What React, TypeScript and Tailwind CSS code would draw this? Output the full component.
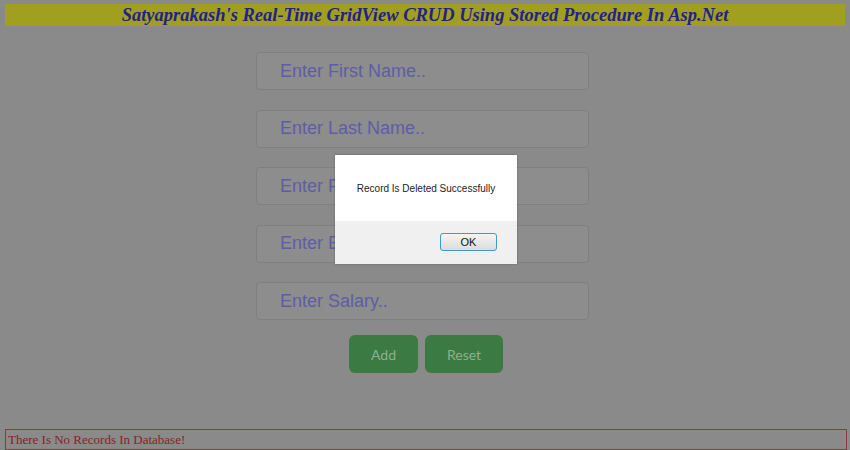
const fields = [
  "Enter First Name..",
  "Enter Last Name..",
  "Enter Phone Number..",
  "Enter Email..",
  "Enter Salary..",
];

export default function App() {
  return (
    <div className="relative w-[850px] h-[450px] overflow-hidden bg-[#8a8a8a] font-['Liberation_Sans',Arial,sans-serif]">
      {/* Title bar */}
      <div className="pt-[4px] px-[5px]">
        <div className="h-[22px] bg-[#a09f1f] flex items-center justify-center">
          <h1 className="text-[18.5px] leading-[22px] font-bold italic text-[#22228a] font-['Liberation_Serif','Times_New_Roman',serif]">
            Satyaprakash's Real-Time GridView CRUD Using Stored Procedure In Asp.Net
          </h1>
        </div>
      </div>

      {/* Form */}
      <div className="flex flex-col items-center pt-[26px]">
        <div className="flex flex-col gap-[19.5px] mr-[5px]">
          {fields.map((f) => (
            <div
              key={f}
              className="w-[333px] h-[38px] rounded-[4px] border border-[#7f7f7f] bg-[#8d8d8d] flex items-center pl-[23px] text-[18px] text-[#5d5da6]"
            >
              {f}
            </div>
          ))}
        </div>
        <div className="flex gap-[7px] mt-[15px] ml-[2px] font-['Lato',sans-serif] text-[14px] text-[#8fb08f]">
          <button className="w-[69px] h-[38px] rounded-[6px] bg-[#3b7a42]">Add</button>
          <button className="w-[78px] h-[38px] rounded-[6px] bg-[#3b7a42]">Reset</button>
        </div>
      </div>

      {/* Footer message */}
      <div className="absolute left-[5px] right-[3px] top-[429px] h-[21px] border border-[#8e3a3a] flex items-center pl-[2px] text-[13px] text-[#862323] font-['Liberation_Serif','Times_New_Roman',serif]">
        There Is No Records In Database!
      </div>

      {/* Alert dialog */}
      <div className="absolute left-[335px] top-[155px] w-[182px] h-[109px] bg-white flex flex-col shadow-[0_0_2px_rgba(0,0,0,0.3)]">
        <div className="h-[66px] flex items-center justify-center text-[10px] text-[#222]">
          Record Is Deleted Successfully
        </div>
        <div className="flex-1 bg-[#f0f0f0] flex items-center justify-end pr-[20px] pb-[1px]">
          <button className="w-[57px] h-[18px] rounded-[3px] border border-[#3c9ad6] bg-gradient-to-b from-[#f4f4f4] to-[#dcdcdc] text-[11px] text-[#111] leading-none">
            OK
          </button>
        </div>
      </div>
    </div>
  );
}
